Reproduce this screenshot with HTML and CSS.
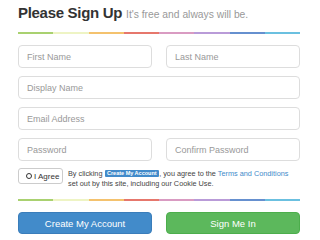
FILE: index.html
```html
<!DOCTYPE html>
<html lang="en">
<head>
    <meta charset="UTF-8">
    <meta name="viewport" content="width=device-width, initial-scale=1.0">
    <title>Please Sign Up</title>
    <link rel="stylesheet" href="styles.css">
</head>
<body>
    <form class="signup">
        <h2 class="title">Please Sign Up <small>It's free and always will be.</small></h2>
        <div class="rainbow"></div>

        <div class="fields">
            <div class="row">
                <input type="text" class="field" placeholder="First Name">
                <input type="text" class="field" placeholder="Last Name">
            </div>
            <input type="text" class="field" placeholder="Display Name">
            <input type="email" class="field" placeholder="Email Address">
            <div class="row">
                <input type="password" class="field" placeholder="Password">
                <input type="password" class="field" placeholder="Confirm Password">
            </div>
        </div>

        <!-- terms agreement -->
        <div class="agree-row">
            <label class="agree-btn"><span class="radio"></span>I Agree</label>
            <p class="terms">
                By clicking <strong class="badge">Create My Account</strong>, you agree to the
                <a href="#" class="terms-link">Terms and Conditions</a><br>
                set out by this site, including our Cookie Use.
            </p>
        </div>

        <div class="rainbow"></div>

        <div class="row actions">
            <button type="button" class="btn btn-primary">Create My Account</button>
            <button type="button" class="btn btn-success">Sign Me In</button>
        </div>
    </form>
</body>
</html>
```

FILE: styles.css
```css
:root {
    --text: #333333;
    --muted: #999999;
    --border: #dddddd;
    --primary: #428bca;
    --primary-border: #3a7dba;
    --success: #5cb85c;
    --success-border: #4cae4c;
}

* {
    margin: 0;
    padding: 0;
    box-sizing: border-box;
}

body {
    font-family: "Liberation Sans", Arial, sans-serif;
    background: #ffffff;
    color: var(--text);
}

.signup {
    width: 282px;
    margin-left: 18px;
    padding-top: 4px;
}

.title {
    height: 18px;
    font-size: 15px;
    line-height: 18px;
    font-weight: bold;
    letter-spacing: -0.3px;
    color: var(--text);
    white-space: nowrap;
}

.title small {
    font-size: 10.3px;
    line-height: 1;
    font-weight: normal;
    letter-spacing: 0;
    color: var(--muted);
}

.rainbow {
    height: 2px;
    margin-top: 10px;
    background: linear-gradient(to right,
        #a9d170 0 12.5%,
        #eef4c4 12.5% 25%,
        #f4c26e 25% 37.5%,
        #e6776c 37.5% 50%,
        #d99bc2 50% 62.5%,
        #b99bd8 62.5% 75%,
        #6690cf 75% 87.5%,
        #6bc0e0 87.5% 100%);
}

.fields {
    display: flex;
    flex-direction: column;
    gap: 8px;
    margin-top: 11px;
}

.row {
    display: grid;
    grid-template-columns: 1fr 1fr;
    gap: 14px;
}

.field {
    width: 100%;
    height: 23px;
    padding: 0 8px;
    border: 1px solid var(--border);
    border-radius: 4px;
    font-family: inherit;
    font-size: 9px;
    color: var(--text);
    background: #ffffff;
}

.field::placeholder {
    color: var(--muted);
}

.agree-row {
    display: flex;
    align-items: flex-start;
    gap: 5px;
    height: 21px;
    margin-top: 7px;
}

.agree-btn {
    flex: none;
    display: flex;
    align-items: center;
    gap: 2px;
    width: 45px;
    height: 16px;
    padding-left: 7px;
    border: 1px solid #cccccc;
    border-radius: 3px;
    font-size: 8px;
    color: var(--text);
}

.radio {
    width: 6px;
    height: 6px;
    border: 1.3px solid #333333;
    border-radius: 50%;
}

.terms {
    margin-top: 1px;
    font-size: 7.3px;
    line-height: 10px;
    color: #444444;
    white-space: nowrap;
}

.badge {
    display: inline-block;
    padding: 0 2.5px;
    font-size: 5.5px;
    line-height: 7px;
    font-weight: bold;
    color: #ffffff;
    background: var(--primary);
    border-radius: 1px;
    vertical-align: 1px;
}

.terms-link {
    color: var(--primary);
    text-decoration: none;
}

.actions {
    margin-top: 11px;
}

.btn {
    height: 22px;
    border-radius: 4px;
    font-family: inherit;
    font-size: 9.5px;
    color: #ffffff;
    cursor: pointer;
}

.btn-primary {
    background: var(--primary);
    border: 1px solid var(--primary-border);
}

.btn-success {
    background: var(--success);
    border: 1px solid var(--success-border);
}
```
